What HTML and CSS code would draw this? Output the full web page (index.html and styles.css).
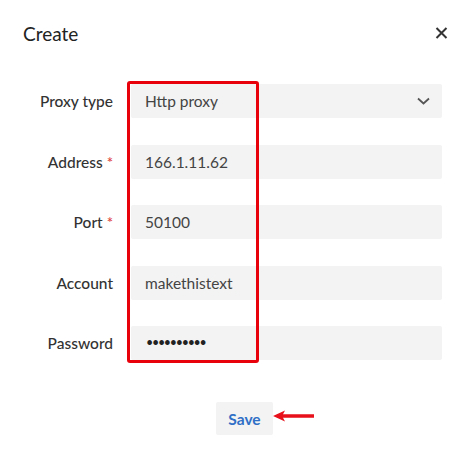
FILE: index.html
```html
<!DOCTYPE html>
<html>
<head>
<meta charset="utf-8">
<link rel="stylesheet" href="styles.css">
</head>
<body>
<div class="dialog">
  <div class="header">
    <div class="title">Create</div>
    <svg class="close" width="13" height="12" viewBox="0 0 13 12"><path d="M1.5 1 L11.5 11 M11.5 1 L1.5 11" stroke="#333" stroke-width="2" fill="none"/></svg>
  </div>
  <div class="form">
    <div class="label">Proxy type</div>
    <div class="field select"><span>Http proxy</span>
      <svg class="chev" width="13" height="8" viewBox="0 0 13 8"><path d="M1 1.5 L6.5 6.5 L12 1.5" stroke="#555" stroke-width="1.8" fill="none"/></svg>
    </div>
    <div class="label">Address <span class="req">*</span></div>
    <div class="field">166.1.11.62</div>
    <div class="label">Port <span class="req">*</span></div>
    <div class="field">50100</div>
    <div class="label">Account</div>
    <div class="field">makethistext</div>
    <div class="label">Password</div>
    <div class="field pw">••••••••••</div>
  </div>
  <div class="footer">
    <button class="save">Save</button>
  </div>
  <div class="highlight"></div>
  <svg class="arrow" width="42" height="12" viewBox="0 0 42 12"><path d="M0 6 L12 0.5 L10 4.3 L41 4.3 L41 7.7 L10 7.7 L12 11.5 Z" fill="#e8101a"/></svg>
</div>
</body>
</html>
```

FILE: styles.css
```css
html, body {
  margin: 0;
  padding: 0;
  background: #fff;
}
body {
  font-family: Lato, "Open Sans", "Liberation Sans", sans-serif;
  color: #333;
}
.dialog {
  position: relative;
  width: 474px;
  height: 450px;
  box-sizing: border-box;
  padding: 20px 26px 0 23px;
}
.header {
  display: flex;
  justify-content: space-between;
  align-items: center;
  height: 26px;
}
.title {
  font-size: 19px;
  color: #222;
}
.form {
  margin-top: 38px;
  display: grid;
  grid-template-columns: 90px 311px;
  column-gap: 18px;
  row-gap: 26.5px;
}
.label {
  font-size: 15.5px;
  font-weight: 500;
  color: #333;
  text-align: right;
  line-height: 34px;
  white-space: nowrap;
}
.req {
  color: #e0463f;
  font-size: 15px;
}
.field {
  height: 34px;
  line-height: 34px;
  background: #f3f3f3;
  border-radius: 2px;
  padding-left: 14px;
  font-size: 15.5px;
  color: #444;
}
.select {
  display: flex;
  justify-content: space-between;
  align-items: center;
  padding-right: 12px;
}
.pw {
  font-size: 12.5px;
  letter-spacing: -1.3px;
  padding-left: 15px;
  color: #222;
}
.footer {
  margin-top: 42px;
  padding-left: 193px;
}
.save {
  font-family: Lato, "Open Sans", sans-serif;
  font-size: 15.5px;
  font-weight: 700;
  color: #2f6fc6;
  background: #f3f3f3;
  border: none;
  border-radius: 2px;
  width: 57px;
  height: 33px;
  padding: 0;
}
.highlight {
  position: absolute;
  left: 127px;
  top: 81px;
  width: 126px;
  height: 276px;
  border: 3px solid #e8000b;
  border-radius: 3px;
}
.arrow {
  position: absolute;
  left: 273px;
  top: 410px;
}
```
